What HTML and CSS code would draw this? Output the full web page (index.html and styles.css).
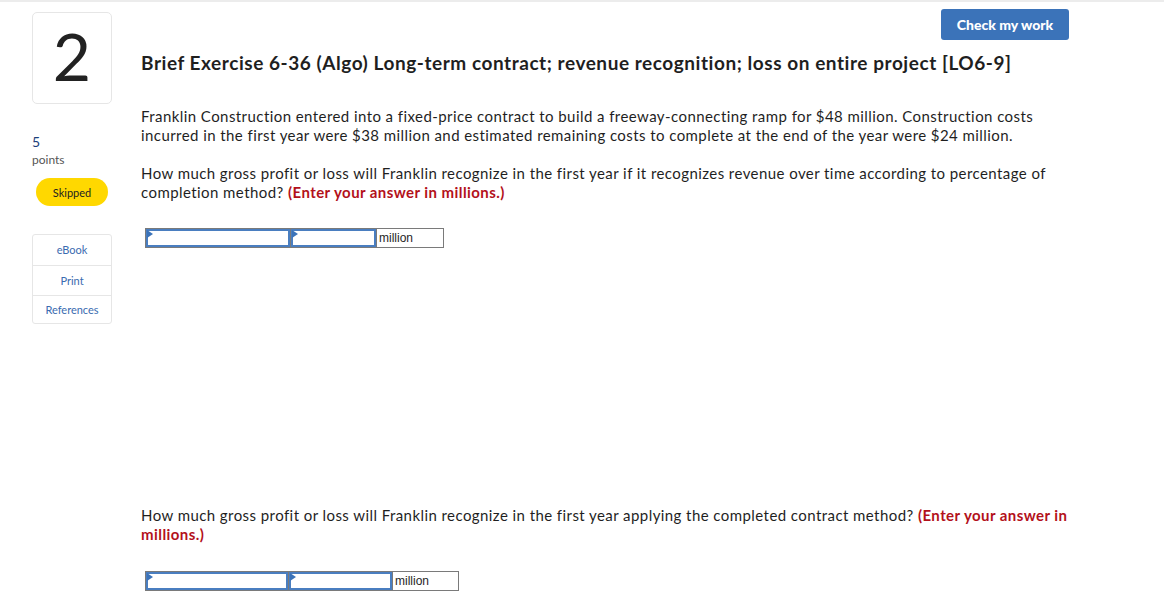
FILE: index.html
```html
<!DOCTYPE html>
<html lang="en">
<head>
    <meta charset="utf-8" />
    <title>Question 2</title>
    <link rel="stylesheet" href="styles.css">
</head>
<body>
    <div class="page">
        <aside class="side">
            <div class="q-num">2</div>
            <div class="pts">
                <div class="pts-val">5</div>
                <div class="pts-lbl">points</div>
            </div>
            <span class="status">Skipped</span>
            <ul class="tools">
                <li><a href="#">eBook</a></li>
                <li><a href="#">Print</a></li>
                <li><a href="#">References</a></li>
            </ul>
        </aside>

        <main class="main">
            <div class="top">
                <button class="btn-check">Check my work</button>
            </div>
            <h1>Brief Exercise 6-36 (Algo) Long-term contract; revenue recognition; loss on entire project [LO6-9]</h1>

            <p class="first">Franklin Construction entered into a fixed-price contract to build a freeway-connecting ramp for $48 million. Construction costs incurred in the first year were $38 million and estimated remaining costs to complete at the end of the year were $24 million.</p>
            <p>How much gross profit or loss will Franklin recognize in the first year if it recognizes revenue over time according to percentage of completion method? <strong class="hint">(Enter your answer in millions.)</strong></p>

            <div class="answer answer--one">
                <span class="cell cell--a"><input type="text"></span>
                <span class="cell cell--b"><input type="text"></span>
                <span class="unit">million</span>
            </div>

            <p class="second">How much gross profit or loss will Franklin recognize in the first year applying the completed contract method? <strong class="hint">(Enter your answer in millions.)</strong></p>

            <div class="answer answer--two">
                <span class="cell cell--a"><input type="text"></span>
                <span class="cell cell--b"><input type="text"></span>
                <span class="unit">million</span>
            </div>
        </main>
    </div>
</body>
</html>
```

FILE: styles.css
```css
:root{
    --line:#e6e6e6;
    --blue:#3b73b9;
    --link:#3a6bb0;
    --red:#b3111b;
    --text:#1f1f1f;
}
*{
    box-sizing:border-box;
}
body{
    margin:0;
    font-family:Lato,"Open Sans",Arial,sans-serif;
    color:var(--text);
    border-top:2px solid #ececec;
}
.page{
    display:flex;
    padding-left:32px;
}
.side{
    width:80px;
    flex:none;
    padding-top:10px;
    display:flex;
    flex-direction:column;
    align-items:flex-start;
}
.q-num{
    width:80px;
    height:92px;
    border:1px solid var(--line);
    border-radius:5px;
    display:flex;
    align-items:center;
    justify-content:center;
    font-size:66px;
    font-weight:400;
    line-height:1;
    padding-bottom:4px;
    color:#222;
}
.pts{
    margin-top:29px;
    font-size:12px;
}
.pts-val{
    color:#1c3f7a;
    font-size:14px;
    line-height:18px;
}
.pts-lbl{
    color:#555;
    line-height:18px;
}
.status{
    margin:9px 0 0 4px;
    width:72px;
    height:28px;
    border-radius:14px;
    background:#ffd800;
    font-size:11px;
    display:flex;
    align-items:center;
    justify-content:center;
    color:#222;
}
.tools{
    list-style:none;
    margin:28px 0 0;
    padding:0;
    width:80px;
    border:1px solid var(--line);
    border-radius:3px;
}
.tools li{
    height:30px;
    display:flex;
    align-items:center;
    justify-content:center;
    border-top:1px solid var(--line);
}
.tools li:first-child{
    border-top:none;
    padding-bottom:2px;
}
.tools li:last-child{
    height:28px;
}
.tools a{
    color:var(--link);
    text-decoration:none;
    font-size:11px;
}
.main{
    flex:1;
    padding-left:29px;
    padding-right:89px;
}
.top{
    display:flex;
    justify-content:flex-end;
    padding-top:7px;
    padding-right:6px;
}
.btn-check{
    width:128px;
    height:31px;
    border:none;
    border-radius:3px;
    background:var(--blue);
    color:#fff;
    font-family:inherit;
    font-weight:900;
    font-size:14px;
}
h1{
    margin:10px 0 0;
    font-size:19px;
    letter-spacing:.55px;
    font-weight:700;
    line-height:26px;
}
p{
    margin:0;
    font-size:15px;
    letter-spacing:.43px;
    line-height:19px;
}
.first{
    margin-top:31px;
    margin-bottom:19px;
}
.hint{
    color:var(--red);
}
.answer{
    display:flex;
    margin-top:26px;
    margin-left:4px;
    height:20px;
    border:1px solid #7a7a7a;
    width:299px;
}
.cell{
    display:block;
    height:18px;
    position:relative;
}
.cell input{
    display:block;
    width:100%;
    height:100%;
    border:2px solid #4a7ec0;
    padding:0;
    margin:0;
    outline:none;
}
.cell::before{
    content:"";
    position:absolute;
    left:1px;
    top:1px;
    border-left:6px solid var(--blue);
    border-top:4px solid transparent;
    border-bottom:4px solid transparent;
}
.answer--one .cell--a{ width:145px; border-right:1px solid #7a7a7a; }
.answer--one .cell--b{ width:86px; border-right:1px solid #7a7a7a; }
.answer--two .cell--a{ width:143px; border-right:1px solid #7a7a7a; }
.answer--two .cell--b{ width:104px; border-right:1px solid #7a7a7a; }
.unit{
    flex:1;
    font-family:Arial,"Liberation Sans",sans-serif;
    font-size:12px;
    line-height:18px;
    padding-left:2px;
}
.second{
    margin-top:258px;
}
.answer--two{
    width:314px;
    margin-top:27px;
}
```
